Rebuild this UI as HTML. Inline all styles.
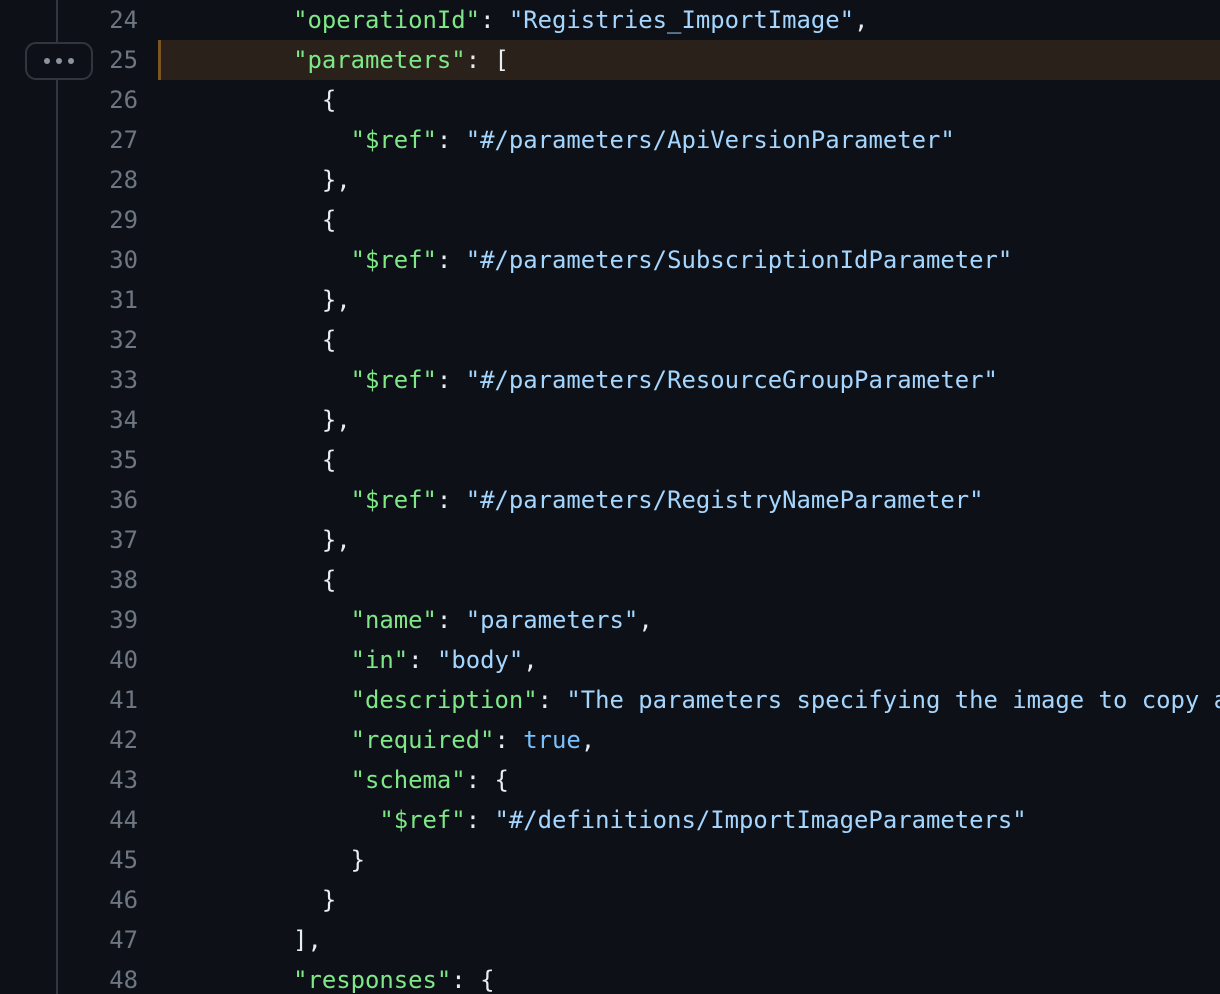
<!DOCTYPE html>
<html><head><meta charset="utf-8"><style>
html,body{margin:0;padding:0;background:#0d1117;width:1220px;height:994px;overflow:hidden}
.wrap{position:relative;width:1220px;height:994px;overflow:hidden;font-family:"DejaVu Sans Mono","Liberation Mono",monospace;font-size:23.9px}
.vline{position:absolute;left:56px;top:0;width:2px;height:994px;background:#30363d}
.btn{position:absolute;left:25px;top:42px;width:64px;height:34px;border:2px solid #30363d;border-radius:11px;background:#0d1117}
.btn i{position:absolute;top:14px;width:6px;height:6px;border-radius:3px;background:#8b949e}
.row{position:absolute;left:0;height:40px;width:1220px;line-height:40px;white-space:pre}
.ln{position:absolute;left:90px;width:48px;text-align:right;color:#6e7681}
.code{position:absolute;left:178px;color:#e6edf3}
.hl{position:absolute;left:158px;top:40px;width:1062px;height:40px;background:#2b211b;border-left:3px solid #7c5620;box-sizing:border-box}
.k{color:#7ee787}.s{color:#a5d6ff}.b{color:#79c0ff}
</style></head><body><div class="wrap">
<div class="vline"></div>
<div class="hl"></div>
<div class="btn"><i style="left:17px"></i><i style="left:29px"></i><i style="left:41px"></i></div>
<div class="row" style="top:0px"><span class="ln">24</span><span class="code">        <span class="k">"operationId"</span>: <span class="s">"Registries_ImportImage"</span>,</span></div>
<div class="row" style="top:40px"><span class="ln">25</span><span class="code">        <span class="k">"parameters"</span>: [</span></div>
<div class="row" style="top:80px"><span class="ln">26</span><span class="code">          {</span></div>
<div class="row" style="top:120px"><span class="ln">27</span><span class="code">            <span class="k">"$ref"</span>: <span class="s">"#/parameters/ApiVersionParameter"</span></span></div>
<div class="row" style="top:160px"><span class="ln">28</span><span class="code">          },</span></div>
<div class="row" style="top:200px"><span class="ln">29</span><span class="code">          {</span></div>
<div class="row" style="top:240px"><span class="ln">30</span><span class="code">            <span class="k">"$ref"</span>: <span class="s">"#/parameters/SubscriptionIdParameter"</span></span></div>
<div class="row" style="top:280px"><span class="ln">31</span><span class="code">          },</span></div>
<div class="row" style="top:320px"><span class="ln">32</span><span class="code">          {</span></div>
<div class="row" style="top:360px"><span class="ln">33</span><span class="code">            <span class="k">"$ref"</span>: <span class="s">"#/parameters/ResourceGroupParameter"</span></span></div>
<div class="row" style="top:400px"><span class="ln">34</span><span class="code">          },</span></div>
<div class="row" style="top:440px"><span class="ln">35</span><span class="code">          {</span></div>
<div class="row" style="top:480px"><span class="ln">36</span><span class="code">            <span class="k">"$ref"</span>: <span class="s">"#/parameters/RegistryNameParameter"</span></span></div>
<div class="row" style="top:520px"><span class="ln">37</span><span class="code">          },</span></div>
<div class="row" style="top:560px"><span class="ln">38</span><span class="code">          {</span></div>
<div class="row" style="top:600px"><span class="ln">39</span><span class="code">            <span class="k">"name"</span>: <span class="s">"parameters"</span>,</span></div>
<div class="row" style="top:640px"><span class="ln">40</span><span class="code">            <span class="k">"in"</span>: <span class="s">"body"</span>,</span></div>
<div class="row" style="top:680px"><span class="ln">41</span><span class="code">            <span class="k">"description"</span>: <span class="s">"The parameters specifying the image to copy a</span></span></div>
<div class="row" style="top:720px"><span class="ln">42</span><span class="code">            <span class="k">"required"</span>: <span class="b">true</span>,</span></div>
<div class="row" style="top:760px"><span class="ln">43</span><span class="code">            <span class="k">"schema"</span>: {</span></div>
<div class="row" style="top:800px"><span class="ln">44</span><span class="code">              <span class="k">"$ref"</span>: <span class="s">"#/definitions/ImportImageParameters"</span></span></div>
<div class="row" style="top:840px"><span class="ln">45</span><span class="code">            }</span></div>
<div class="row" style="top:880px"><span class="ln">46</span><span class="code">          }</span></div>
<div class="row" style="top:920px"><span class="ln">47</span><span class="code">        ],</span></div>
<div class="row" style="top:960px"><span class="ln">48</span><span class="code">        <span class="k">"responses"</span>: {</span></div>
</div></body></html>
